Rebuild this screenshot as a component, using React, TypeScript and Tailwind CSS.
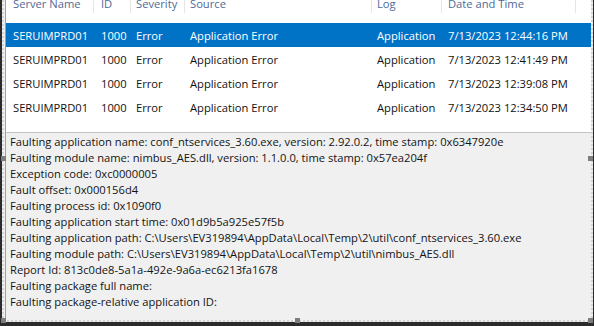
import React from "react";

const rows = [
  { time: "7/13/2023 12:44:16 PM", selected: true },
  { time: "7/13/2023 12:41:49 PM", selected: false },
  { time: "7/13/2023 12:39:08 PM", selected: false },
  { time: "7/13/2023 12:34:50 PM", selected: false },
];

const details = [
  "Faulting application name: conf_ntservices_3.60.exe, version: 2.92.0.2, time stamp: 0x6347920e",
  "Faulting module name: nimbus_AES.dll, version: 1.1.0.0, time stamp: 0x57ea204f",
  "Exception code: 0xc0000005",
  "Fault offset: 0x000156d4",
  "Faulting process id: 0x1090f0",
  "Faulting application start time: 0x01d9b5a925e57f5b",
  "Faulting application path: C:\\Users\\EV319894\\AppData\\Local\\Temp\\2\\util\\conf_ntservices_3.60.exe",
  "Faulting module path: C:\\Users\\EV319894\\AppData\\Local\\Temp\\2\\util\\nimbus_AES.dll",
  "Report Id: 813c0de8-5a1a-492e-9a6a-ec6213fa1678",
  "Faulting package full name:",
  "Faulting package-relative application ID:",
];

function Handle({ className }: { className: string }) {
  return <div className={"absolute w-[5px] h-[5px] bg-[#7d7d7d] " + className} />;
}

export default function App() {
  return (
    <div
      className="relative w-[594px] h-[326px] bg-[#2b2b2b] flex flex-col overflow-hidden text-[11.2px]"
      style={{ fontFamily: '"Open Sans", "Noto Sans", sans-serif' }}
    >
      <div className="h-[322px] ml-[2px] mr-[1px] border-l-2 border-r-2 border-b-2 border-dotted border-[#d4d4d4] bg-[#f0f0f0] pl-[1px] flex flex-col">
        <div className="flex-1 border-l border-[#a0a0a0] flex flex-col">
          {/* List view */}
          <div className="h-[133px] bg-white border-b border-[#c4c4c4] flex flex-col">
            <div className="h-[23px] grid grid-cols-[88px_37px_54px_187px_70px_134px] items-start text-[#4f6a96]">
              <div className="h-[13px] border-r border-[#e5e5e5] pl-[7px] leading-[7px] whitespace-nowrap">Server Name</div>
              <div className="h-[13px] border-r border-[#e5e5e5] pl-[7px] leading-[7px] whitespace-nowrap">ID</div>
              <div className="h-[13px] border-r border-[#e5e5e5] pl-[5px] leading-[7px] whitespace-nowrap">Severity</div>
              <div className="h-[13px] border-r border-[#e5e5e5] pl-[5px] leading-[7px] whitespace-nowrap">Source</div>
              <div className="h-[13px] border-r border-[#e5e5e5] pl-[5px] leading-[7px] whitespace-nowrap">Log</div>
              <div className="h-[13px] border-r border-[#e5e5e5] pl-[6px] leading-[7px] whitespace-nowrap">Date and Time</div>
            </div>
            {rows.map((r) => (
              <div
                key={r.time}
                className={
                  "h-[24px] pt-[2px] leading-[22px] grid grid-cols-[88px_37px_54px_187px_70px_134px] whitespace-nowrap " +
                  (r.selected ? "bg-[#0173c7] text-white" : "text-[#111111]")
                }
              >
                <div className="pl-[7px]">SERUIMPRD01</div>
                <div className="pl-[7px]">1000</div>
                <div className="pl-[5px]">Error</div>
                <div className="pl-[5px]">Application Error</div>
                <div className="pl-[5px]">Application</div>
                <div className="pl-[6px]">{r.time}</div>
              </div>
            ))}
          </div>
          {/* Detail text */}
          <div className="flex-1 bg-[#f0f0f0] pt-[1px] pl-[4px] text-[#141414] leading-[16px] whitespace-nowrap overflow-hidden">
            {details.map((d) => (
              <div key={d}>{d}</div>
            ))}
          </div>
        </div>
      </div>
      <Handle className="left-[1px] top-[156px]" />
      <Handle className="left-[588px] top-[156px]" />
      <Handle className="left-[1px] top-[318px]" />
      <Handle className="left-[295px] top-[318px]" />
      <Handle className="left-[588px] top-[318px]" />
    </div>
  );
}
